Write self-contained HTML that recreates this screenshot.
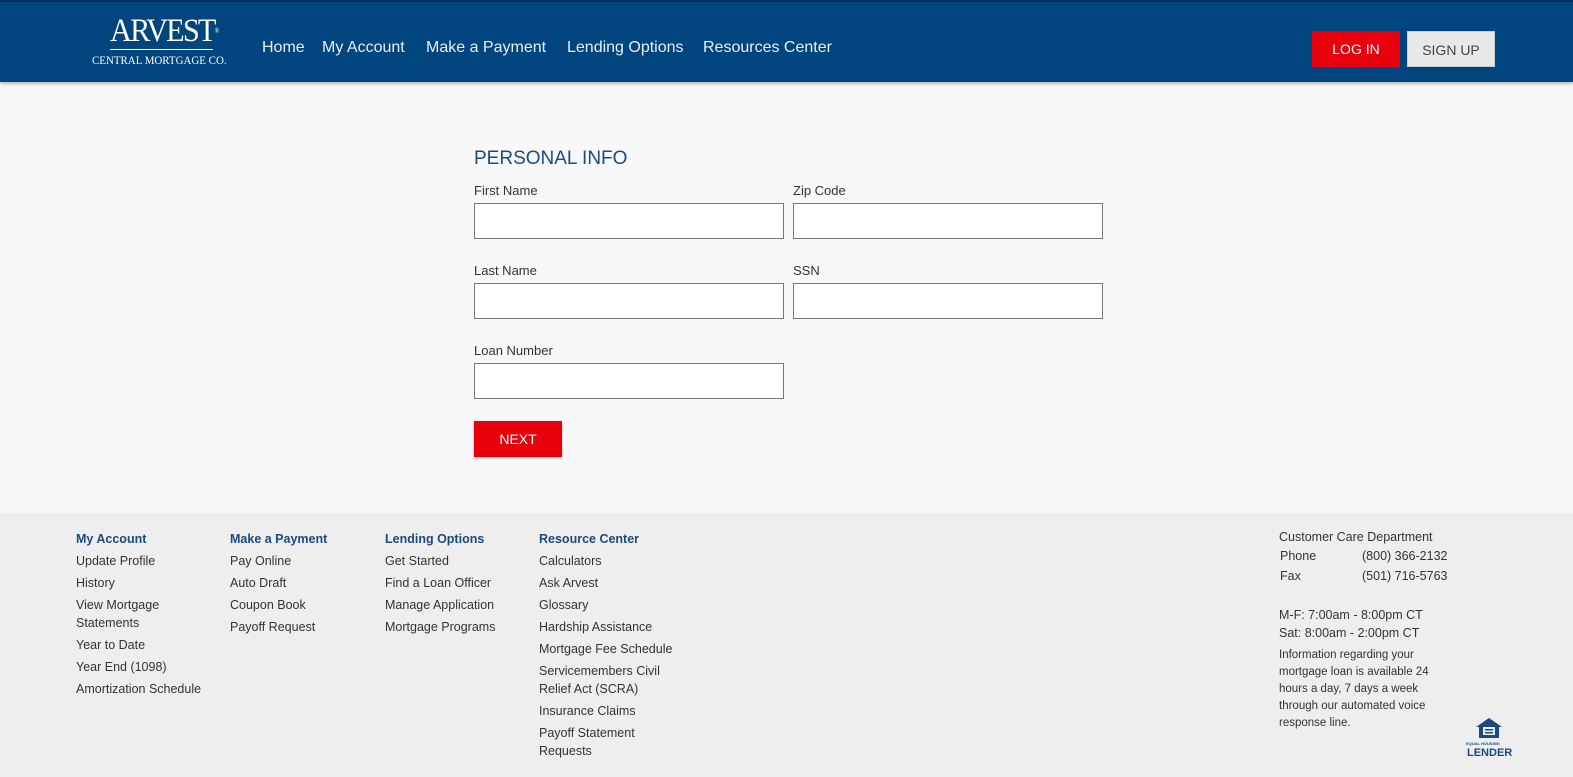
<!DOCTYPE html>
<html><head><style>
*{box-sizing:border-box;margin:0;padding:0}
body{width:1573px;height:777px;overflow:hidden;font-family:"Liberation Sans",sans-serif;background:#f8f8f8;position:relative}
.hdr{position:absolute;left:0;top:0;width:1573px;height:82px;background:#00457e;border-top:2px solid #0b2d5c;box-shadow:0 2px 3px rgba(0,0,0,.25)}
.nav{position:absolute;top:38px;color:#e8eef6;font-size:16px}
.btn{position:absolute;font-size:14px;text-align:center}
.abs{position:absolute}
label{position:absolute;font-size:13px;color:#333}
.in{position:absolute;width:310px;height:36px;background:#fff;border:1px solid #777}
.foot{position:absolute;left:0;top:513px;width:1573px;height:264px;background:#eeeeee}
.col{position:absolute;top:17px;font-size:12.5px;color:#333}
.col b{color:#1a4a80;display:block;line-height:18px;margin-bottom:4px}
.col div{line-height:18px;margin-bottom:4px}
.r{position:absolute;font-size:12.5px;color:#333}
</style></head><body>
<div class="hdr">
 <div class="abs" style="left:110px;top:12px;color:#fff;font-family:'Liberation Serif',serif;font-size:33px;letter-spacing:-2px;line-height:34px;transform:scaleX(.92);transform-origin:left">ARVEST<span style="font-size:7px;vertical-align:top">®</span></div>
 <div class="abs" style="left:110px;top:47px;width:103px;height:1px;background:#fff"></div>
 <div class="abs" style="left:92px;top:53px;color:#fff;font-family:'Liberation Serif',serif;font-size:11.5px;letter-spacing:0;transform:scaleX(.95);transform-origin:left">CENTRAL MORTGAGE CO.</div>
 <div class="nav" style="left:262px;top:37px">Home</div>
 <div class="nav" style="left:322px;top:37px">My Account</div>
 <div class="nav" style="left:426px;top:37px">Make a Payment</div>
 <div class="nav" style="left:567px;top:37px">Lending Options</div>
 <div class="nav" style="left:703px;top:37px">Resources Center</div>
 <div class="btn" style="left:1312px;top:29px;width:88px;height:36px;line-height:36px;background:#e8000c;color:#fff">LOG IN</div>
 <div class="btn" style="left:1407px;top:29px;width:88px;height:36px;line-height:36px;background:#e8e8e8;color:#444;border:1px solid #ccc">SIGN UP</div>
</div>
<div class="abs" style="left:474px;top:148px;font-size:19px;color:#1a4a80">PERSONAL INFO</div>
<label style="left:474px;top:183px">First Name</label>
<label style="left:793px;top:183px">Zip Code</label>
<div class="in" style="left:474px;top:203px"></div>
<div class="in" style="left:793px;top:203px"></div>
<label style="left:474px;top:263px">Last Name</label>
<label style="left:793px;top:263px">SSN</label>
<div class="in" style="left:474px;top:283px"></div>
<div class="in" style="left:793px;top:283px"></div>
<label style="left:474px;top:343px">Loan Number</label>
<div class="in" style="left:474px;top:363px"></div>
<div class="btn" style="left:474px;top:421px;width:88px;height:36px;line-height:36px;background:#e8000c;color:#fff;box-shadow:0 1px 2px rgba(0,0,0,.3)">NEXT</div>
<div class="foot">
 <div class="col" style="left:76px;width:140px"><b>My Account</b><div>Update Profile</div><div>History</div><div>View Mortgage<br>Statements</div><div>Year to Date</div><div>Year End (1098)</div><div>Amortization Schedule</div></div>
 <div class="col" style="left:230px"><b>Make a Payment</b><div>Pay Online</div><div>Auto Draft</div><div>Coupon Book</div><div>Payoff Request</div></div>
 <div class="col" style="left:385px"><b>Lending Options</b><div>Get Started</div><div>Find a Loan Officer</div><div>Manage Application</div><div>Mortgage Programs</div></div>
 <div class="col" style="left:539px"><b>Resource Center</b><div>Calculators</div><div>Ask Arvest</div><div>Glossary</div><div>Hardship Assistance</div><div>Mortgage Fee Schedule</div><div>Servicemembers Civil<br>Relief Act (SCRA)</div><div>Insurance Claims</div><div>Payoff Statement<br>Requests</div></div>
 <div class="r" style="left:1279px;top:17px">Customer Care Department</div>
 <div class="r" style="left:1280px;top:36px">Phone</div><div class="r" style="left:1362px;top:36px">(800) 366-2132</div>
 <div class="r" style="left:1280px;top:56px">Fax</div><div class="r" style="left:1362px;top:56px">(501) 716-5763</div>
 <div class="r" style="left:1279px;top:95px">M-F: 7:00am - 8:00pm CT</div>
 <div class="r" style="left:1279px;top:113px">Sat: 8:00am - 2:00pm CT</div>
 <div class="r" style="left:1279px;top:134px;width:172px;font-size:11.5px;line-height:17px">Information regarding your mortgage loan is available 24 hours a day, 7 days a week through our automated voice response line.</div>
 <svg class="abs" style="left:1475px;top:204px" width="28" height="22" viewBox="0 0 28 22"><path d="M14 1 L1 10 L4 10 L4 21 L24 21 L24 10 L27 10 Z" fill="#1a4a80"/><rect x="8" y="10" width="12" height="8" fill="#eee"/><rect x="10" y="12" width="8" height="1.5" fill="#1a4a80"/><rect x="10" y="15" width="8" height="1.5" fill="#1a4a80"/></svg>
 <div class="abs" style="left:1466px;top:228px;font-size:4px;color:#1a4a80;font-weight:bold">EQUAL HOUSING</div>
 <div class="abs" style="left:1467px;top:234px;font-size:11px;color:#1a4a80;font-weight:bold">LENDER</div>
</div>
</body></html>
